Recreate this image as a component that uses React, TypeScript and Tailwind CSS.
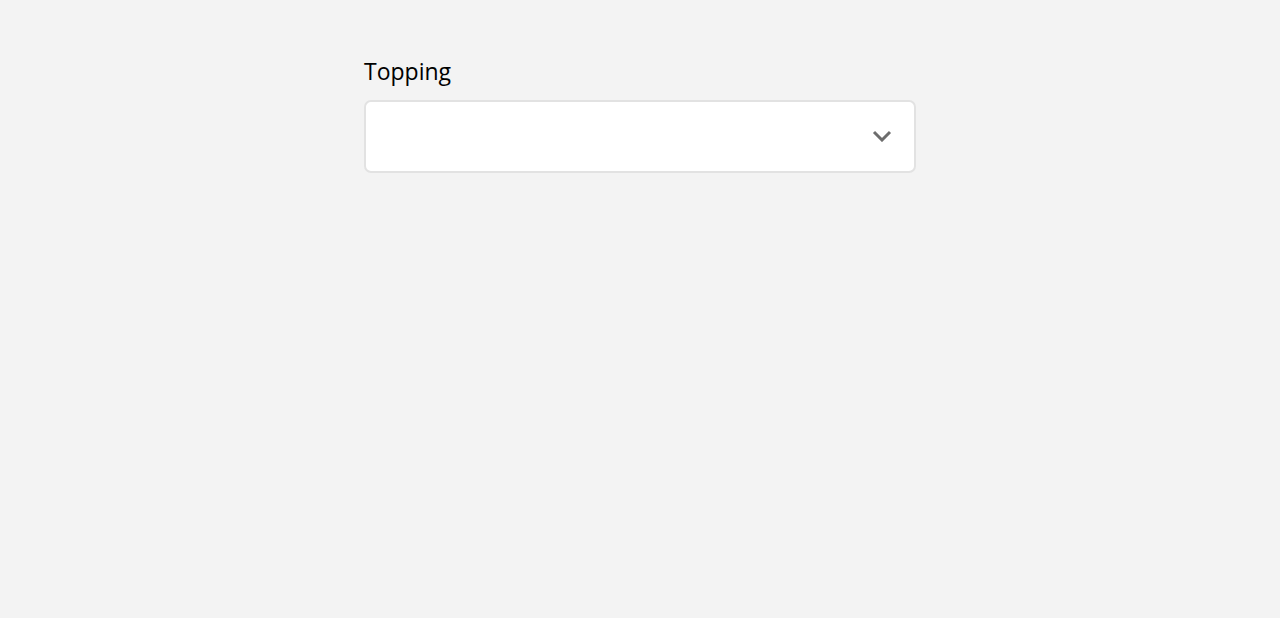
export default function App() {
  return (
    <div
      className="min-h-[618px] w-full bg-[#f3f3f3]"
      style={{ fontFamily: '"Open Sans", sans-serif' }}
    >
      <div className="mx-auto w-[552px] pt-[55px]">
        <label className="block text-[23px] leading-[32px] text-black">Topping</label>
        <div className="mt-[13px] flex h-[73px] items-center justify-end rounded-[7px] border-2 border-[#e2e2e2] bg-white pr-[22px]">
          <svg width="20" height="12" viewBox="0 0 20 12" fill="none" className="-mt-[2px]">
            <path d="M2 2l8 8 8-8" stroke="#6d6d6d" strokeWidth="3" />
          </svg>
        </div>
      </div>
    </div>
  );
}
